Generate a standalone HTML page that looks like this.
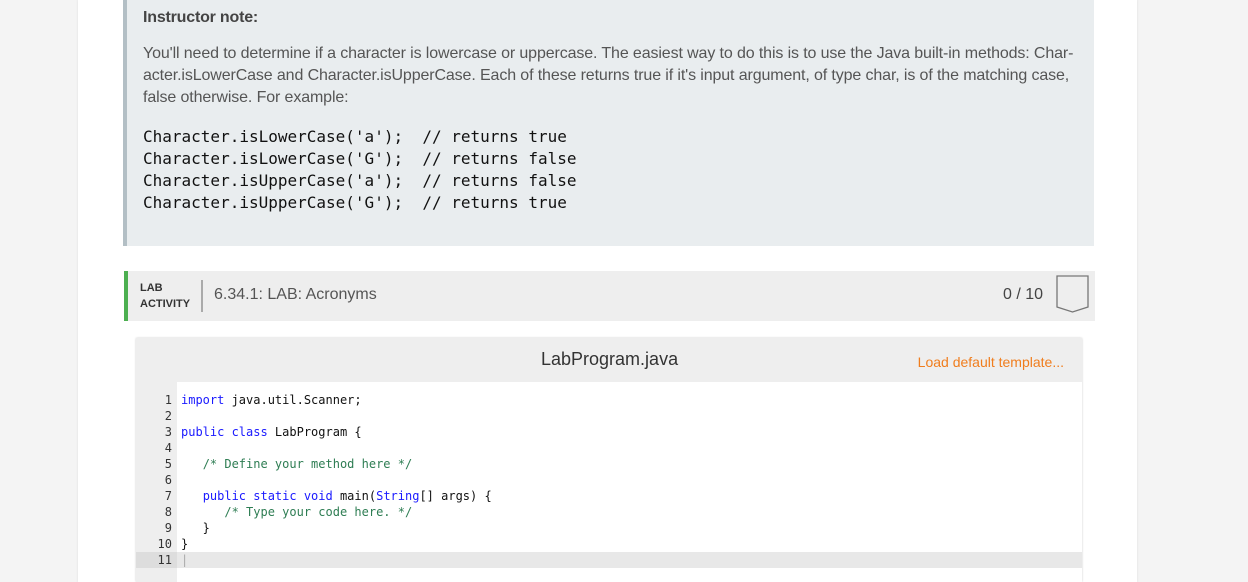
<!DOCTYPE html>
<html><head><style>
body{margin:0;width:1248px;height:582px;overflow:hidden;background:#f4f4f4;font-family:"Liberation Sans",sans-serif;position:relative}
.page{position:absolute;left:78px;top:0;width:1059px;height:582px;background:#fff;box-shadow:0 0 2px #ddd}
.note{position:absolute;left:123px;top:0;width:967px;height:246px;background:#e9edef;border-left:4px solid #b3bfc5}
.note .t{position:absolute;left:16px;top:9px;font-size:16px;font-weight:bold;color:#444;letter-spacing:-0.2px}
.note .p{position:absolute;left:16px;top:43px;width:960px;font-size:16px;line-height:22px;color:#555;letter-spacing:-0.12px;white-space:nowrap}
.note pre{position:absolute;left:16px;top:126px;margin:0;font-family:"DejaVu Sans Mono",monospace;font-size:16px;line-height:22px;color:#111}
.lab{position:absolute;left:124px;top:271px;width:967px;height:50px;background:#eee;border-left:4px solid #4caf50}
.lab .l{position:absolute;left:12px;top:9px;font-size:11px;font-weight:bold;color:#333;line-height:16px}
.lab .sep{position:absolute;left:73px;top:9px;width:2px;height:32px;background:#aaa}
.lab .ti{position:absolute;left:86px;top:15px;font-size:16px;color:#555}
.lab .sc{position:absolute;left:875px;top:15px;font-size:16px;color:#444}
.ed{position:absolute;left:136px;top:338px;width:946px;height:244px;background:#fff;box-shadow:0 0 2px #ccc}
.ed .h{height:44px;background:#eee;position:relative}
.ed .fn{position:absolute;left:405px;top:11px;font-size:18px;color:#333}
.ed .ld{position:absolute;right:18px;top:16px;font-size:14px;color:#f07d1d}
.gut{position:absolute;left:0;top:44px;width:41px;height:200px;background:#eee}
.code{position:absolute;left:0;top:54px;width:946px;font-family:"DejaVu Sans Mono",monospace;font-size:12px;line-height:16px}
.ln{display:flex;height:16px}
.ln .n{width:36px;text-align:right;color:#333}
.ln .c{padding-left:9px;color:#111;white-space:pre}
.k{color:#1a1aff}.cm{color:#2e7d53}
</style></head><body>
<div class="page"></div>
<div class="note">
<div class="t">Instructor note:</div>
<div class="p">You'll need to determine if a character is lowercase or uppercase. The easiest way to do this is to use the Java built-in methods: Char-<br>acter.isLowerCase and Character.isUpperCase. Each of these returns true if it's input argument, of type char, is of the matching case,<br>false otherwise. For example:</div>
<pre>Character.isLowerCase('a');  // returns true
Character.isLowerCase('G');  // returns false
Character.isUpperCase('a');  // returns false
Character.isUpperCase('G');  // returns true</pre>
</div>
<div class="lab">
<div class="l">LAB<br>ACTIVITY</div><div class="sep"></div>
<div class="ti">6.34.1: LAB: Acronyms</div>
<div class="sc">0 / 10</div>
<svg style="position:absolute;left:928px;top:4px" width="34" height="38"><path d="M1 1H32V32L16.5 37L1 32Z" fill="none" stroke="#777" stroke-width="1.3"/></svg>
</div>
<div class="ed">
<div class="h"><div class="fn">LabProgram.java</div><div class="ld">Load default template...</div></div>
<div class="gut"></div>
<div class="code">
<div class="ln"><span class="n">1</span><span class="c"><span class="k">import</span> java.util.Scanner;</span></div>
<div class="ln"><span class="n">2</span><span class="c"></span></div>
<div class="ln"><span class="n">3</span><span class="c"><span class="k">public class</span> LabProgram {</span></div>
<div class="ln"><span class="n">4</span><span class="c"></span></div>
<div class="ln"><span class="n">5</span><span class="c">   <span class="cm">/* Define your method here */</span></span></div>
<div class="ln"><span class="n">6</span><span class="c"></span></div>
<div class="ln"><span class="n">7</span><span class="c">   <span class="k">public static void</span> main(<span class="k">String</span>[] args) {</span></div>
<div class="ln"><span class="n">8</span><span class="c">      <span class="cm">/* Type your code here. */</span></span></div>
<div class="ln"><span class="n">9</span><span class="c">   }</span></div>
<div class="ln"><span class="n">10</span><span class="c">}</span></div>
<div class="ln" style="background:#e8e8e8"><span class="n" style="background:#ddd;width:36px;padding-right:5px">11</span><span class="c" style="padding-left:4px;color:#aaa">|</span></div>
</div>
</div>
</body></html>
